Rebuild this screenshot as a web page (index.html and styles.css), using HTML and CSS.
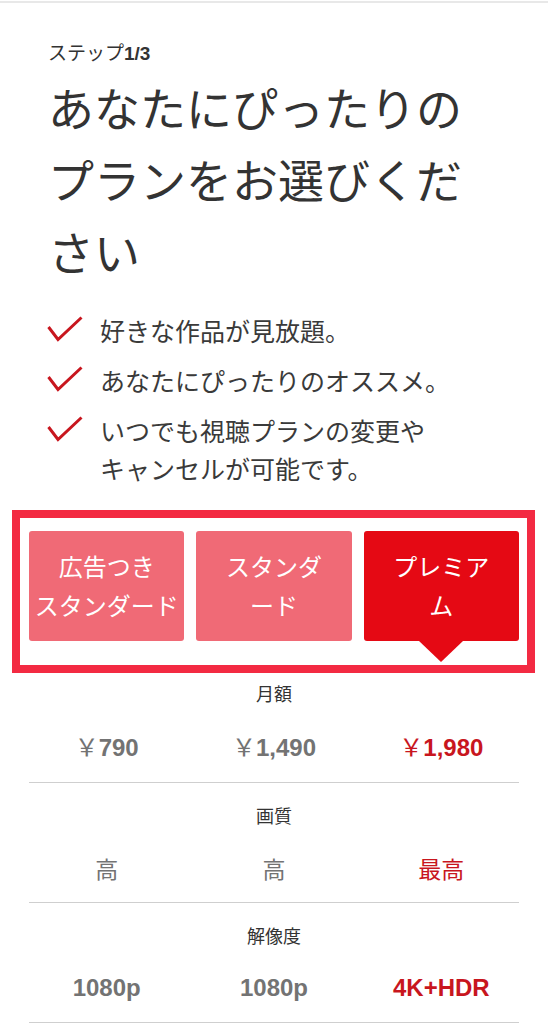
FILE: index.html
```html
<!DOCTYPE html>
<html lang="ja">
<head>
<meta charset="utf-8">
<title>プランを選択</title>
<link rel="stylesheet" href="styles.css">
</head>
<body>
<div class="topline"></div>
<header class="intro">
  <div class="step">ステップ<b>1/3</b></div>
  <h1 class="title">あなたにぴったりのプランをお選びください</h1>
  <ul class="checks">
    <li class="check">
      <svg class="tick" viewBox="0 0 36 26" width="36" height="26"><polyline points="1.5,11 11,23.5 34.5,1.5" fill="none" stroke="#c8161e" stroke-width="3"/></svg>
      <span>好きな作品が見放題。</span>
    </li>
    <li class="check">
      <svg class="tick" viewBox="0 0 36 26" width="36" height="26"><polyline points="1.5,11 11,23.5 34.5,1.5" fill="none" stroke="#c8161e" stroke-width="3"/></svg>
      <span>あなたにぴったりのオススメ。</span>
    </li>
    <li class="check">
      <svg class="tick" viewBox="0 0 36 26" width="36" height="26"><polyline points="1.5,11 11,23.5 34.5,1.5" fill="none" stroke="#c8161e" stroke-width="3"/></svg>
      <span>いつでも視聴プランの変更や<br>キャンセルが可能です。</span>
    </li>
  </ul>
</header>

<section class="frame">
  <div class="tabs">
    <div class="tab">広告つき<br>スタンダード</div>
    <div class="tab">スタンダ<br>ード</div>
    <div class="tab selected">プレミア<br>ム</div>
  </div>
</section>

<section class="table">
  <div class="row first">
    <div class="label">月額</div>
    <div class="values">
      <div class="val num"><span class="yen">￥</span>790</div>
      <div class="val num"><span class="yen">￥</span>1,490</div>
      <div class="val num on"><span class="yen">￥</span>1,980</div>
    </div>
  </div>
  <div class="row">
    <div class="label">画質</div>
    <div class="values">
      <div class="val">高</div>
      <div class="val">高</div>
      <div class="val on">最高</div>
    </div>
  </div>
  <div class="row">
    <div class="label">解像度</div>
    <div class="values">
      <div class="val num">1080p</div>
      <div class="val num">1080p</div>
      <div class="val num on">4K+HDR</div>
    </div>
  </div>
</section>
</body>
</html>
```

FILE: styles.css
```css
* { box-sizing: border-box; }
html, body { margin: 0; padding: 0; background: #fff; }
body {
  font-family: "Noto Sans CJK JP", "Noto Sans", sans-serif;
  color: #333;
  width: 548px;
  overflow: hidden;
}
.topline {
  margin-top: 1px;
  height: 2px;
  background: #e8e8e8;
}
.intro {
  padding: 0 48px;
}
.step {
  margin-top: 37px;
  font-size: 19px;
  line-height: 24px;
  color: #333;
}
.step b {
  font-family: "Liberation Sans", sans-serif;
  font-weight: 700;
}
.title {
  margin: 4px 0 0;
  font-size: 46px;
  line-height: 72px;
  font-weight: 400;
  color: #333;
}
.checks {
  list-style: none;
  margin: 25px 0 0;
  padding: 0;
  display: flex;
  flex-direction: column;
  gap: 12px;
}
.check {
  display: flex;
  align-items: flex-start;
  gap: 17px;
  font-size: 25px;
  line-height: 38px;
  color: #3a3a3a;
}
.tick {
  flex: none;
  margin-top: 5px;
  margin-left: -1px;
}
.frame {
  margin: 23px 13px 0 12px;
  border: 8px solid #f32a42;
  padding: 13px 8px 3px 9px;
}
.tabs {
  display: flex;
  gap: 12px;
  padding-bottom: 21px;
}
.tab {
  flex: 1;
  height: 110px;
  border-radius: 3px;
  background: #f06a76;
  color: #fff;
  font-size: 24px;
  line-height: 39px;
  text-align: center;
  display: flex;
  align-items: center;
  justify-content: center;
  padding-bottom: 2px;
  position: relative;
  white-space: nowrap;
}
.tab.selected {
  background: #e50914;
}
.tab.selected::after {
  content: "";
  position: absolute;
  left: 50%;
  top: 100%;
  margin-left: -22px;
  border-left: 22px solid transparent;
  border-right: 22px solid transparent;
  border-top: 21px solid #e50914;
}
.table {
  margin: 0 29px;
}
.row {
  padding: 20px 0 19px;
  border-bottom: 1px solid #cfcfcf;
  display: flex;
  flex-direction: column;
  gap: 26px;
}
.row.first {
  padding-top: 8px;
}
.label {
  text-align: center;
  font-size: 18px;
  line-height: 24px;
  color: #333;
}
.values {
  display: grid;
  grid-template-columns: 1fr 1fr 1fr;
  gap: 12px;
}
.val {
  text-align: center;
  font-size: 23px;
  line-height: 30px;
  color: #737373;
}
.val.num {
  font-family: "Liberation Sans", "Noto Sans CJK JP", sans-serif;
  font-weight: 700;
  font-size: 24px;
}
.yen {
  font-family: "Noto Sans CJK JP", sans-serif;
  font-weight: 400;
  font-size: 24px;
}
.val.on {
  color: #c8161e;
}
```
